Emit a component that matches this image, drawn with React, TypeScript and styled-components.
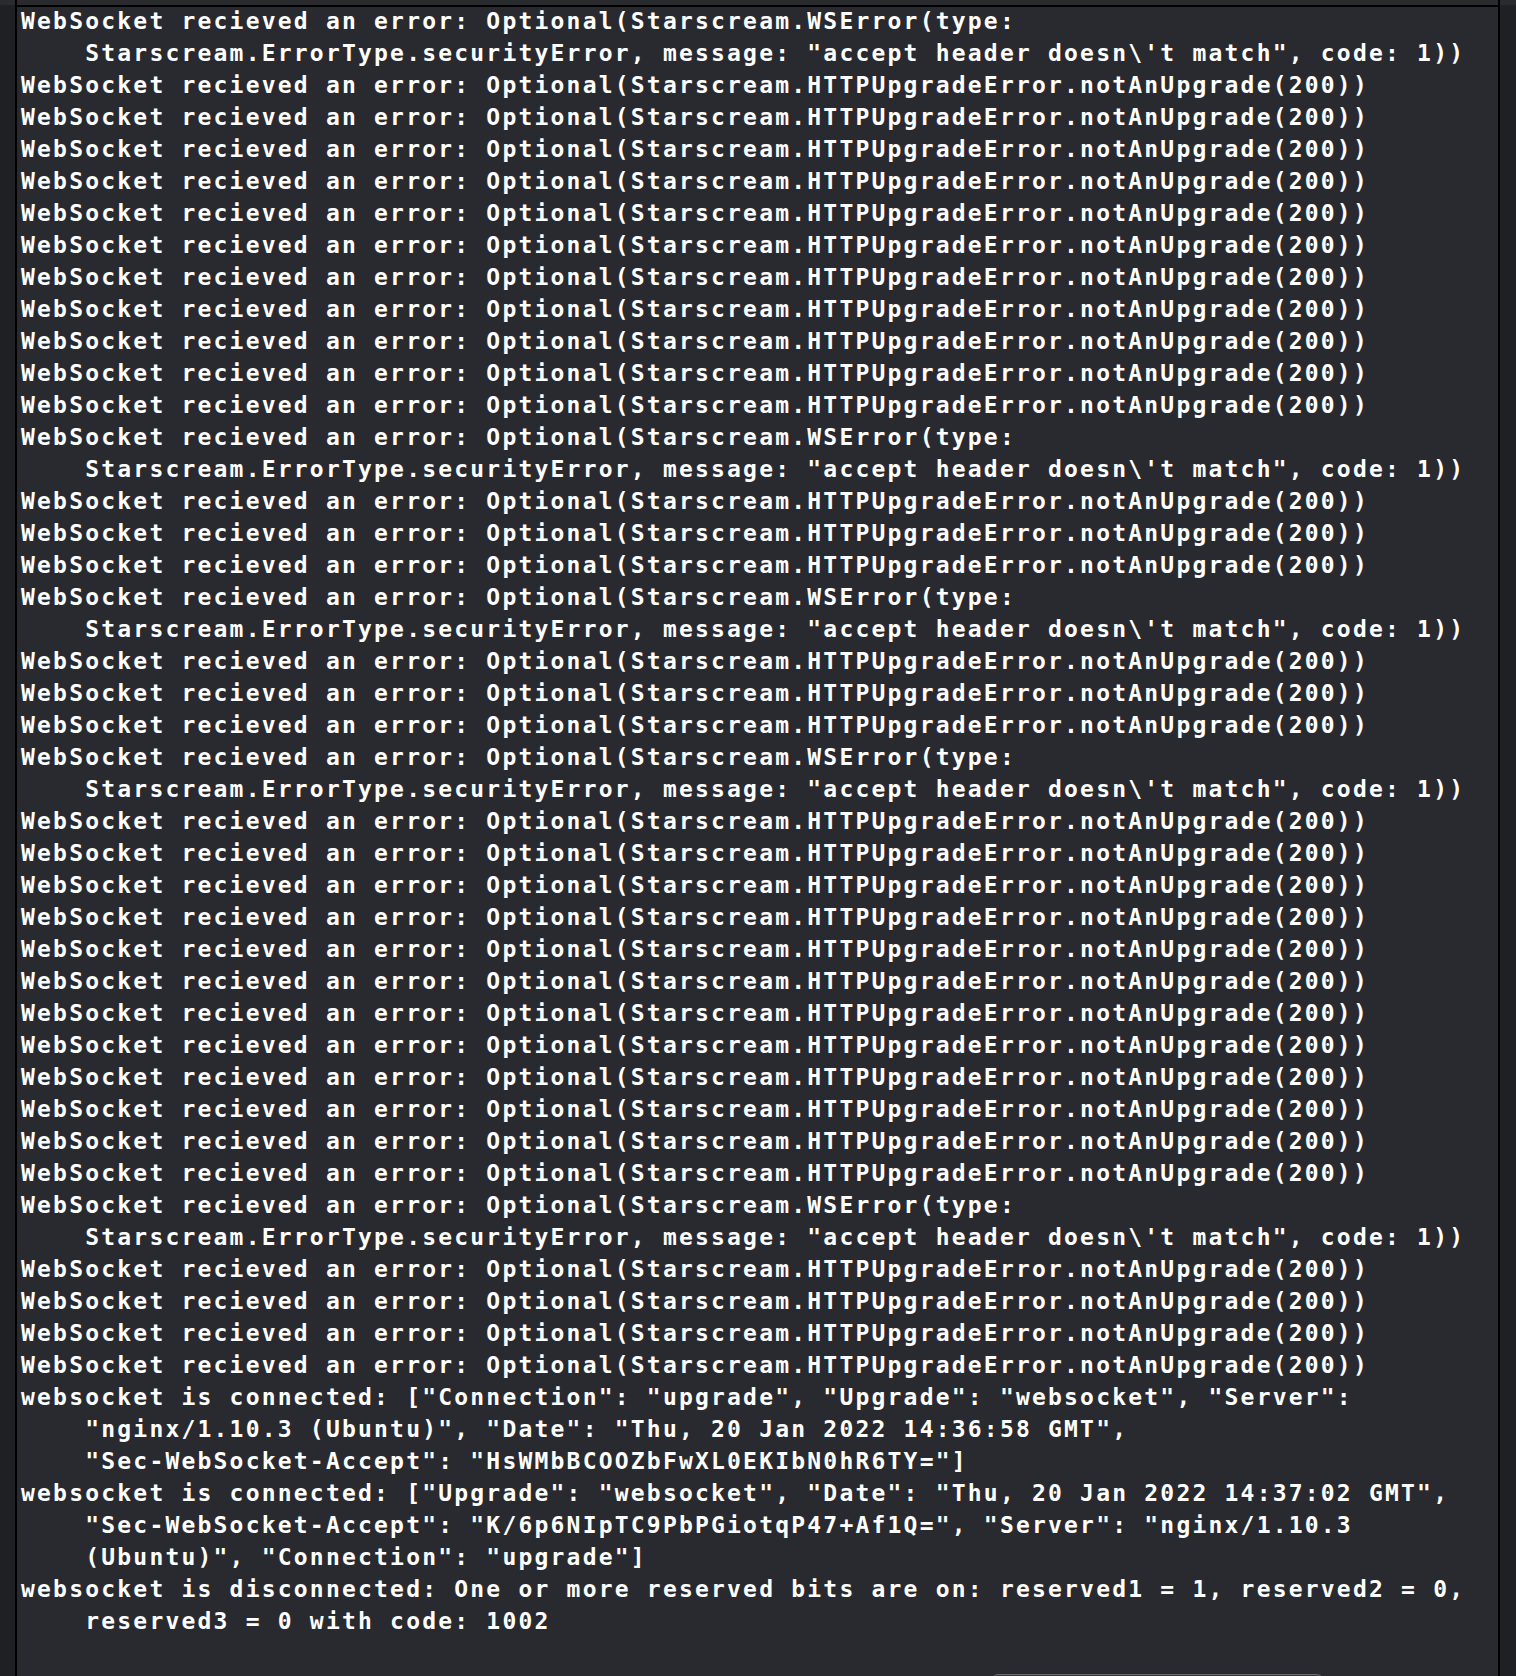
import React from "react";
import styled, { createGlobalStyle } from "styled-components";

const GlobalStyle = createGlobalStyle`
  html, body {
    margin: 0;
    padding: 0;
    background: #1f2023;
  }
  #root {
    width: 1516px;
    height: 1676px;
  }
`;

const Window = styled.div`
  position: relative;
  display: flex;
  width: 1516px;
  height: 1676px;
  overflow: hidden;
  background: #1f2023;
`;

const Gutter = styled.div<{ $w: number }>`
  flex: 0 0 ${(p) => p.$w}px;
  background: #1f2023;
  border-top: 5px solid #2a2b2f;
`;

const Divider = styled.div`
  flex: 0 0 2px;
  background: #000000;
`;

const Main = styled.div`
  flex: 1 1 auto;
  display: flex;
  flex-direction: column;
  min-width: 0;
  background: #292a2f;
`;

const TopStrip = styled.div`
  flex: 0 0 5px;
  background: #2a2b2f;
  border-bottom: 2px solid #000000;
`;

const Log = styled.div`
  margin-top: -2.5px;
  padding-left: 4px;
  font-family: "DejaVu Sans Mono", "Liberation Mono", monospace;
  font-weight: 700;
  font-size: 23px;
  letter-spacing: 2.2px;
  line-height: 32px;
  color: #ffffff;
  white-space: pre;
`;

const Line = styled.div<{ $indent?: boolean }>`
  height: 32px;
  padding-left: ${(p) => (p.$indent ? "64.2px" : "0")};
`;

const ScrollPill = styled.div`
  position: absolute;
  left: 992px;
  top: 1674px;
  width: 331px;
  height: 12px;
  box-sizing: border-box;
  border: 1px solid #6c6c70;
  border-radius: 6px;
  background: #36373b;
`;

const HTTP = [
  "WebSocket recieved an error: Optional(Starscream.HTTPUpgradeError.notAnUpgrade(200))",
];
const WS = [
  "WebSocket recieved an error: Optional(Starscream.WSError(type:",
  `Starscream.ErrorType.securityError, message: "accept header doesn\\'t match", code: 1))`,
];
const CONNECTED_1 = [
  `websocket is connected: ["Connection": "upgrade", "Upgrade": "websocket", "Server":`,
  `"nginx/1.10.3 (Ubuntu)", "Date": "Thu, 20 Jan 2022 14:36:58 GMT",`,
  `"Sec-WebSocket-Accept": "HsWMbBCOOZbFwXL0EKIbN0hR6TY="]`,
];
const CONNECTED_2 = [
  `websocket is connected: ["Upgrade": "websocket", "Date": "Thu, 20 Jan 2022 14:37:02 GMT",`,
  `"Sec-WebSocket-Accept": "K/6p6NIpTC9PbPGiotqP47+Af1Q=", "Server": "nginx/1.10.3`,
  `(Ubuntu)", "Connection": "upgrade"]`,
];
const DISCONNECTED = [
  "websocket is disconnected: One or more reserved bits are on: reserved1 = 1, reserved2 = 0,",
  "reserved3 = 0 with code: 1002",
];

const repeat = (entry: string[], n: number) => Array.from({ length: n }, () => entry);

const entries: string[][] = [
  WS,
  ...repeat(HTTP, 11),
  WS,
  ...repeat(HTTP, 3),
  WS,
  ...repeat(HTTP, 3),
  WS,
  ...repeat(HTTP, 12),
  WS,
  ...repeat(HTTP, 4),
  CONNECTED_1,
  CONNECTED_2,
  DISCONNECTED,
];

export default function App() {
  return (
    <>
      <GlobalStyle />
      <Window>
        <Gutter $w={15} />
        <Divider />
        <Main>
          <TopStrip />
          <Log>
            {entries.map((entry, i) => (
              <React.Fragment key={i}>
                {entry.map((text, j) => (
                  <Line key={j} $indent={j > 0}>
                    {text}
                  </Line>
                ))}
              </React.Fragment>
            ))}
          </Log>
        </Main>
        <Divider />
        <Gutter $w={16} />
        <ScrollPill />
      </Window>
    </>
  );
}
